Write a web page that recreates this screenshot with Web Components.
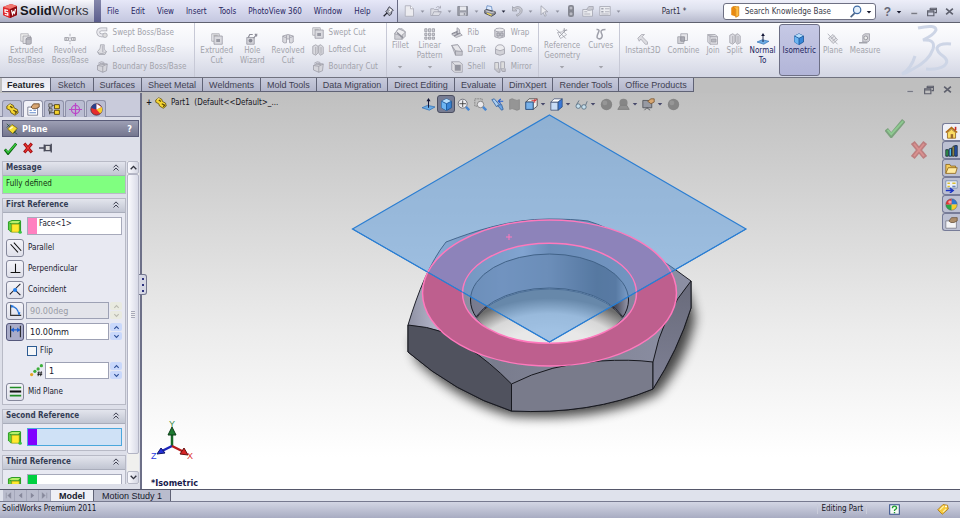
<!DOCTYPE html>
<html lang="en">
<head>
<meta charset="utf-8">
<title>SolidWorks - Part1</title>
<style>
html,body{height:100%;margin:0}
body{font-family:"DejaVu Sans Condensed","DejaVu Sans",sans-serif;font-size:8px;line-height:10px;color:#16182c;overflow:hidden}
</style>
</head>
<body>
<sw-app></sw-app>
<script>
const ICONS = {
  cube3d:'<path d="M1 4l8-3 6 2v9l-7 3-7-3z" fill="#c8141c"/><path d="M1 4l7 2v9l-7-3z" fill="#e0282c"/><path d="M8 6l7-3v9l-7 3z" fill="#8e0c12"/><path d="M1 4l8-3 6 2-7 3z" fill="#f27870"/><path d="M6 7.500l-3-.7v2.200l2.800 1v2.200l-3-1M9.500 7.200l1 4 1-2.500 1 1.600 1-4.500" fill="none" stroke="#fff" stroke-width="1.200"/>',
  pin:'<path d="M9 1l6 5-2 2-1 4-3 2-5-6 2-2z" fill="#a4a6b2" stroke="#22232f"/><path d="M6 10l-5 5" stroke="#22232f" stroke-width="2"/><path d="M9 4l3 2-3 3" fill="none" stroke="#fff" stroke-width="1.500"/>',
  page:'<path d="M3 1h7l4 4v10H3z" fill="#ececf0" stroke="#a5a7b3"/><path d="M10 1v4h4" fill="#fff" stroke="#a5a7b3"/>',
  open:'<path d="M1 14V5h4l1 1h5v3h4l-3 5z" fill="#dcdde4" stroke="#a0a2af"/><path d="M3 14l2-5h10M8 4c2-3 4-2 6 0M14 1v3h-3" fill="none" stroke="#a0a2af"/>',
  save:'<path d="M1 2h13v12H1z" fill="#9c9ea9" stroke="#7f818c"/><path d="M4 2h8v5H4z" fill="#e8e9ee"/><path d="M4 10h8v4H4z" fill="#d4d5dc"/><path d="M9 11h2v2H9z" fill="#7f818c"/>',
  print:'<path d="M3 7l1-6 6 1 1 6z" fill="#dceaff" stroke="#5c84bc"/><path d="M1 7l3-1 11 3v3l-5 3-9-4z" fill="#8d8e95" stroke="#34363f"/><path d="M2 7.500l8 2.500 4-1" fill="none" stroke="#e8e8ec"/><path d="M4 11l6 2.500" fill="none" stroke="#f5dc50" stroke-width="1.500"/>',
  undo:'<path d="M2 2v6h6L6 6c3-2 6-1 6 2s-3 4-5 5l1 2c4-2 7-4 7-8S9 0 4 4z" fill="#c7c8d0" stroke="#9a9ca8"/>',
  cursor:'<path d="M4 1v12l3-3 2 5 2-1-2-5h4z" fill="#ececf1" stroke="#9a9ca8"/>',
  traffic:'<rect x="4" y="0" width="8" height="16" rx="3" fill="#858792"/><circle cx="8" cy="4" r="2" fill="#b9bac3"/><circle cx="8" cy="11.500" r="2" fill="#b9bac3"/>',
  props:'<path d="M1 6h13v9H1z" fill="#ebecf0" stroke="#a0a2ae"/><path d="M6 6l3-4h6v4l-4 1H8z" fill="#c9cad2" stroke="#a0a2ae"/><path d="M3 9h4M3 12h8" stroke="#a0a2ae"/>',
  list:'<path d="M1 2h14v12H1z" fill="#ebecf0" stroke="#a0a2ae"/><path d="M3 4h3v2H3zM3 8h3v2H3z" fill="#a0a2ae"/><path d="M8 5h6M8 9h6M3 12h10" stroke="#a0a2ae"/>',
  book:'<path d="M3 2l6-2v14l-6-2z" fill="#e98a10"/><path d="M5 1h8v12l-4 2V4z" fill="#ffbe43" stroke="#d07808"/>',
  lens:'<circle cx="10" cy="6" r="4.500" fill="#e4f0fb" stroke="#3f6ba4" stroke-width="1.500"/><path d="M7 10l-5 5" stroke="#4b6486" stroke-width="2"/>',
  min:'<path d="M2 10h11v3H2z" fill="#6b6d7a" stroke="#fff" stroke-width=".5"/>',
  restore:'<path d="M5 2h10v7h-3M5 2v3M5 4h10" fill="none" stroke="#5c5e6b" stroke-width="1.800"/><path d="M1 6h10v8H1zM1 8h10" fill="none" stroke="#5c5e6b" stroke-width="1.800"/>',
  close:'<path d="M2 3l12 10M14 3L2 13" stroke="#5e606d" stroke-width="3"/>',
  extrude:'<path d="M1 1h10v10H1z" fill="#eee" stroke="#a9a9b1"/><path d="M4 4h10v10H4z" fill="#e0e0e4" stroke="#9d9da6"/><path d="M8 8h7v6l-2 1H8zM8 8l2-2h5v2" fill="#bbbbc2" stroke="#92929b"/>',
  revolve:'<path d="M8 1v14" stroke="#999aa4" stroke-dasharray="3 1"/><path d="M6 6H1v4h5zM10 6h5v4h-5z" fill="#e1e1e6" stroke="#96979f"/><path d="M3 7v2M13 7v2" stroke="#888"/>',
  sweep:'<path d="M15 3H7a4 4 0 0 0 0 8h4" fill="none" stroke="#a6a7b0" stroke-width="5"/><path d="M14 3H7a4 4 0 0 0 0 8h4" fill="none" stroke="#e9e9ee" stroke-width="3"/><circle cx="12" cy="11" r="3" fill="#ddd" stroke="#a6a7b0"/>',
  loft:'<path d="M6 1h5c0 6 0 7 3 9l-2 4H4l-2-4c3-3 4-4 4-9z" fill="#dedee3" stroke="#a2a3ac"/><path d="M9 2v9" stroke="#bcbcc5" stroke-width="2"/><path d="M2 11q6 4 12-1" fill="none" stroke="#a2a3ac"/>',
  boundary:'<path d="M2 6l5-3 8 1-1 9-5 2-7-3z" fill="#d5d5db" stroke="#999aa4"/><path d="M2 6l7 1 6-3M9 7v8M5 4l7 1" fill="none" stroke="#999aa4"/><path d="M3 3l4-2 4 1" fill="none" stroke="#999aa4"/>',
  cut:'<path d="M1 1h10v10H1z" fill="#ededf0" stroke="#a1a1aa"/><path d="M4 4h11v11H4z" fill="#dadadf" stroke="#9595a0"/><path d="M7 8h5v4H7z" fill="#999aa4"/><path d="M3 3h6" stroke="#999"/>',
  hole:'<path d="M1 6h10v9H1z" fill="#d2d2d8" stroke="#93939d"/><circle cx="6" cy="10" r="2.500" fill="#888994"/><path d="M3 6l2-4h4M10 7l5-6M12 1l1 2M15 4l-2-1" stroke="#8c8c97" fill="none" stroke-width="1.500"/>',
  revcut:'<path d="M1 4q7-4 14 0v8q-2 2-5 1V8H6v5q-3 1-5-1z" fill="#dadadf" stroke="#9b9ba5"/><path d="M1 4q2 2 5 2V3M10 3v3q3 0 5-2M6 6v2M10 6v2" fill="none" stroke="#9b9ba5"/>',
  fillet:'<path d="M1 15V7l5-6h5l4 4v6l-4 4z" fill="#d1d1d7" stroke="#9a9ba4"/><path d="M1 8q7 0 10 7V9q4-2 4-4L6 1z" fill="#ededf0" stroke="#9a9ba4"/><path d="M4 6l8 7" stroke="#8f909a" stroke-width="2"/>',
  linear:'<g fill="#d4d4da" stroke="#93949e"><path d="M1 1h3v4H1zM6 1h3v4H6zM11 1h3v4h-3zM1 7h3v3H1zM6 7h3v3H6zM11 7h3v3h-3zM1 12h3v3H1zM6 12h3v3H6zM11 12h3v3h-3z"/></g>',
  rib:'<path d="M1 10l6 4 8-3-3-3-1-5-3-2v6z" fill="#d3d3d9" stroke="#999aa4"/><path d="M1 9l7-3v4l4-2M4 12l4-2" fill="none" stroke="#888994" stroke-width="1.500"/>',
  draft:'<path d="M1 2l8-1 6 9v5H6z" fill="#c7c7ce" stroke="#999aa4"/><path d="M1 2l5 7v6M6 9h9" fill="none" stroke="#8f909a"/><path d="M1 2l8-1 6 9-9-1z" fill="#e6e6ea" stroke="#999aa4"/>',
  shell:'<path d="M1 1h10l4 3v11H5l-4-3z" fill="#e0e0e5" stroke="#999aa4"/><path d="M5 5h8v8H5z" fill="#94959f"/><path d="M1 1l4 4" stroke="#999aa4"/>',
  wrap:'<path d="M1 4v9q6 4 13 0V4z" fill="#d1d1d7" stroke="#999aa4"/><ellipse cx="7.500" cy="4" rx="6.500" ry="2.500" fill="#ececef" stroke="#999aa4"/><path d="M4 8h3v4H4zM9 8h3v4H9z" fill="none" stroke="#888994"/>',
  dome:'<path d="M2 7v6q6 4 12 0V7z" fill="#d1d1d7" stroke="#999aa4"/><path d="M2 7q0-6 6-6t6 6q-6 4-12 0z" fill="#ececef" stroke="#999aa4"/>',
  mirror:'<path d="M1 2h5v9H1zM9 1h5v9H9z" fill="#ddd" stroke="#999aa4"/><path d="M1 11l4 4h3v-5M9 10l2 4h4v-4" fill="#c5c5cc" stroke="#999aa4"/>',
  refgeo:'<path d="M2 6l4 8 8-5-4-4z" fill="none" stroke="#a3a4ad"/><path d="M1 2l12 12M14 2L4 12M11 0v5M9 3h6" stroke="#93949e"/>',
  curves:'<path d="M2 2c8-1-1 7 1 11 4 4 8-1 6-5s-1-6 5-6" fill="none" stroke="#9fa0aa" stroke-width="2"/>',
  instant:'<path d="M1 7l5-5h4l-3 3 7 7v3h-3L5 8l-2 3z" fill="#dcdce1" stroke="#a5a6af"/>',
  combine:'<path d="M1 5h8v9H1z" fill="#d0d0d6" stroke="#9a9ba4"/><path d="M5 1h9v9H5z" fill="#e6e6ea" stroke="#9a9ba4"/><path d="M5 5h5v6H5z" fill="#aaabb4" stroke="#8c8d97"/>',
  join:'<path d="M1 2h10l3 3v10H4l-3-3z" fill="#e1e1e6" stroke="#9d9ea7"/><path d="M1 2l3 3h10M4 5v10M6 8h6v4H6z" fill="#b8b9c1" stroke="#9d9ea7"/>',
  split:'<path d="M1 3l4-2 3 2v9l-3 3-4-2zM9 2l3-1 3 3v9l-4 2-2-3z" fill="#dadae0" stroke="#9d9ea7"/><path d="M5 4v10M12 4v9" stroke="#9d9ea7"/>',
  normal:'<path d="M0 12l7-3 9 2-7 4z" fill="#6cacE4" stroke="#2566ae" stroke-width=".8"/><path d="M8 12V3" stroke="#111536" stroke-width="1.200"/><path d="M8 0l2.500 4h-5z" fill="#111536"/>',
  iso:'<path d="M8 1l6 3v8l-6 3.500L2 12V4z" fill="#3886d8" stroke="#155092"/><path d="M2 4l6 3v8.500L2 12z" fill="#6db5f2"/><path d="M8 1l6 3-6 3-6-3z" fill="#b5dcfa"/><path d="M2 4l6 3 6-3M8 7v8" fill="none" stroke="#155092"/>',
  plane:'<path d="M2 7l6-5 6 7-6 5z" fill="#e6e6ea" stroke="#a3a4ad"/><path d="M1 1l13 14M5 8l5-4M7 11l5-4" stroke="#a3a4ad"/>',
  measure:'<path d="M5 3l3-2h6v9l-2 2H5z" fill="#d0d0d6" stroke="#999aa4"/><circle cx="9" cy="6.500" r="2.500" fill="#eee" stroke="#83848e"/><path d="M0 12h11v2H0z" fill="#a3a4ad"/>',
  part:'<path d="M1 4l4-3 4 2 1 3 4 2 1 4-4 3-5-3-1-3-4-2z" fill="#f6d631" stroke="#5b4708"/><path d="M5 4l3 2M9 9l4 2-2 2" fill="none" stroke="#5b4708" stroke-width="1.500"/><path d="M3 3l3-1" stroke="#fff8b8"/>',
  propgr:'<path d="M1 5h12v10H1z" fill="#fff" stroke="#6a6f86"/><path d="M3 9h3M3 12h8M8 9h3" stroke="#3f6fc2"/><path d="M5 5l3-4h7v4l-4 2H7z" fill="#d9a671" stroke="#674525"/>',
  config:'<path d="M2 1v13M2 3h5M2 12h6" stroke="#333" fill="none"/><path d="M1 1h4v4H1zM1 7h4v3H1z" fill="#bbb" stroke="#555"/><path d="M8 2h6v5H8zM8 9h6v5H8z" fill="#f5d42c" stroke="#473706"/>',
  target:'<circle cx="8" cy="8" r="5" fill="none" stroke="#bb45c8" stroke-width="1.500"/><path d="M8 0v16M0 8h16" stroke="#bb45c8" stroke-width="1.500"/>',
  ball:'<path d="M8 8V1a7 7 0 0 1 7 7z" fill="#2c78d2"/><path d="M8 8h7a7 7 0 0 1-7 7z" fill="#f6d02a"/><path d="M8 8v7a7 7 0 0 1-7-7z" fill="#2aa746"/><path d="M8 8H1a7 7 0 0 1 7-7z" fill="#e83333"/><circle cx="8" cy="8" r="7" fill="none" stroke="#555" stroke-width=".6"/><circle cx="6" cy="5" r="2" fill="#ffffff88"/>',
  ball2:'<circle cx="8" cy="8" r="7" fill="#e62b2b" stroke="#40384b"/><path d="M8 8V1a7 7 0 0 0-6.500 5z" fill="#28408c"/><path d="M8 8l6.500-3a7 7 0 0 1-2 8z" fill="#f6d02a"/><path d="M8 1l6 4-6 3z" fill="#fff"/>',
  planey:'<path d="M8 2l7 5-6 7-7-6z" fill="#f7df36" stroke="#716207"/><path d="M1 1l4 4M11 12l4 3M1 6l4-4M10 14l4-4" stroke="#1c4a2d" fill="none"/><path d="M5 8l4-3" stroke="#fffbd0" stroke-width="2"/>',
  ok:'<path d="M1 9l4 5L15 2" fill="none" stroke="#0c6c10" stroke-width="3.500"/><path d="M2 9.500l3 3.500L14.500 2.500" fill="none" stroke="#3bd042" stroke-width="1.500"/>',
  cancel:'<path d="M3 2l10 12M13 2L3 14" stroke="#a80f12" stroke-width="4"/><path d="M4 3l8 10M12 3L4 13" stroke="#f03a36" stroke-width="1.500"/>',
  pushpin:'<path d="M0 8h6M6 4v8M7 5h6v6H7zM14 3v10" fill="#ddd" stroke="#4a4c5b" stroke-width="1.500"/>',
  face:'<path d="M1 3l4-2h9l1 1v10l-2 2H4l-3-3z" fill="#2f9e28"/><path d="M2 4v7l2.500 2.500V6z" fill="#5fd044"/><path d="M2 3.500l3.500-1.500H14l-2 2.500H4.500z" fill="#b7f06a"/><path d="M5 5.500h8V14H5z" fill="#ffe92e" stroke="#a09a10" stroke-width=".6"/><circle cx="14" cy="14" r="1.800" fill="#37c23f"/>',
  parallel:'<path d="M2 4l9 10M6 2l9 10" stroke="#111" stroke-width="1.300"/>',
  perp:'<path d="M8 2v11M2 13h12" stroke="#111" stroke-width="1.300"/>',
  coincident:'<path d="M14 1L7 8 1 14M8 9l6 6" stroke="#1a1a28" stroke-width="1.300"/><circle cx="7.500" cy="8.500" r="2.500" fill="#2680ec"/>',
  angle:'<path d="M2 1v13h13" fill="none" stroke="#333" stroke-width="1.300"/><path d="M3 3q8 1 9 10" fill="none" stroke="#2474da" stroke-width="1.500"/><path d="M2 1l4 1-3 3zM13 14l-2-4 3 0z" fill="#2474da"/>',
  distance:'<path d="M2 1v14M14 1v14" stroke="#222" stroke-width="1.300"/><path d="M3 6h10" stroke="#1c5fd0" stroke-width="1.500"/><path d="M2 6l4-3v6zM14 6l-4-3v6z" fill="#1c5fd0"/>',
  count:'<circle cx="2" cy="13" r="2" fill="#e4a421"/><circle cx="6" cy="9" r="2" fill="#3caf3b"/><circle cx="10" cy="6" r="2" fill="#3caf3b"/><circle cx="14" cy="2" r="2" fill="#3caf3b"/><path d="M11 9l-1 6M14 9l-1 6M9 11h6M9 13h6" stroke="#111"/>',
  mid:'<path d="M1 3h14M1 13h14" stroke="#208d25" stroke-width="2"/><path d="M1 8h14" stroke="#111" stroke-width="2.500"/>',
  zoomfit:'<circle cx="7" cy="7" r="5.500" fill="#ececf0" stroke="#62646e"/><path d="M7 3v8M3 7h8" stroke="#333"/><path d="M11 11l4 4" stroke="#4a87d2" stroke-width="3"/>',
  zoombox:'<rect x="1" y="1" width="9" height="9" fill="none" stroke="#777" stroke-dasharray="2 1"/><circle cx="8" cy="8" r="4" fill="#e9e9ed" stroke="#777"/><path d="M11 11l4 4" stroke="#4a87d2" stroke-width="3"/>',
  prev:'<path d="M1 2l3-1 6 7-3 3z" fill="#a9cdf2" stroke="#34619c"/><path d="M8 9l5 6 2-1-2-6z" fill="#6ba4e4" stroke="#34619c"/><path d="M15 4H9M12 1L9 4l3 3" stroke="#255fd0" stroke-width="1.500" fill="none"/>',
  section:'<path d="M2 2q3-2 6 0t6 0v12q-3 2-6 0t-6 0z" fill="#959595" stroke="#888"/>',
  views:'<path d="M1 5h9v9H1z" fill="#78b2ea" stroke="#30517e"/><path d="M1 5l4-4h10v9l-5 4V5z" fill="#eee" stroke="#444"/><path d="M10 5l5-4M12 1v5M8 3h6" stroke="#d23535"/><path d="M1 5h9v9H1z" fill="#78b2ea" stroke="#30517e"/>',
  style:'<path d="M1 5h9v10H1z" fill="#c8dcf6" stroke="#4a5879"/><path d="M1 5l4-4h10l-5 4z" fill="#fff" stroke="#4a5879"/><path d="M10 5l5-4v10l-5 4z" fill="#3a78d8" stroke="#30517e"/>',
  glasses:'<circle cx="4" cy="10" r="2.800" fill="#c6e0ee" stroke="#546a7c"/><circle cx="11" cy="11" r="2.800" fill="#c6e0ee" stroke="#546a7c"/><path d="M2 8l3-5M13 9l2-5M7 10h1" stroke="#546a7c" fill="none"/>',
  sphere:'<circle cx="8" cy="8" r="7" fill="#858585"/><circle cx="6" cy="6" r="3" fill="#969696"/>',
  scene:'<circle cx="8" cy="6" r="5" fill="#868686"/><path d="M1 14l3-5h8l3 5z" fill="#919191" stroke="#7c7c7c"/>',
  render:'<path d="M1 3h11v9H1z" fill="#979aa3" stroke="#4e5058"/><path d="M7 4l4-3h4v4l-4 2z" fill="#d8a771" stroke="#795633"/><path d="M3 15l3-3 4 3" fill="none" stroke="#4e5058"/>',
  home:'<path d="M1 8l7-6 7 6" fill="none" stroke="#b06a10" stroke-width="2"/><path d="M3 8l5-4 5 4v7H3z" fill="#fbdd62" stroke="#92631b"/><path d="M7 10h3v5H7z" fill="#9a6a30"/><path d="M12 1h2v4h-2z" fill="#c92b24"/>',
  library:'<path d="M1 7h3v8H1z" fill="#36a04a" stroke="#123"/><path d="M5 6l3-1v10H5z" fill="#47b4ea" stroke="#123"/><path d="M9 4l2-2v13H9z" fill="#f3d43a" stroke="#123"/><path d="M12 2h3v13h-3z" fill="#2a58b6" stroke="#123"/>',
  folder:'<path d="M1 14V3h5l1 2h6v3" fill="#f5cd5d" stroke="#89611a"/><path d="M1 14l3-7h11l-2 7z" fill="#ffeaa0" stroke="#89611a"/>',
  palette:'<path d="M1 1h14v9H1z" fill="#edf2fa" stroke="#7488a9"/><path d="M3 3h3v2H3zM9 3h4v2H9zM3 7h3v2H3z" fill="#d8bc30"/><path d="M9 7h4v2H9z" fill="#6c86b4"/><path d="M1 13h8M6 10l4 3-4 3" stroke="#1c35c4" fill="none" stroke-width="1.800"/>',
  custom:'<path d="M1 6h13v9H1z" fill="#f4f4f6" stroke="#7b7d89"/><path d="M5 6l3-4h7v4l-4 2H7z" fill="#ac8d6b" stroke="#6d5741"/>',
  help:'<path d="M1 1h14v14H1z" fill="#f6fbf6" stroke="#334e8a" stroke-width="1.500"/><path d="M5 6q0-3 3-3t3 3q0 1-2 2-1 .6-1 2M8 11.500v2" fill="none" stroke="#1d9c2c" stroke-width="2"/>',
  tag:'<path d="M1 9l7-7 6 1 1 5-8 7z" fill="#f7c93a" stroke="#a66f0a"/><path d="M4 9l5-5M8 12l4-4" stroke="#fff0a4" stroke-width="1.500"/><circle cx="12" cy="4.500" r="1.300" fill="#fff"/>',
  chev:'<path d="M4 7l4-4 4 4M4 12l4-4 4 4" fill="none" stroke="#343648" stroke-width="1.500"/>',
  up:'<path d="M3 11l5-5 5 5" fill="none" stroke="currentColor" stroke-width="2.500"/>',
  down:'<path d="M3 5l5 5 5-5" fill="none" stroke="currentColor" stroke-width="2.500"/>',
  tri:'<path d="M2 5h12l-6 7z" fill="currentColor"/>',
  first:'<path d="M4 3v10M12 3L7 8l5 5z" stroke="#85879a" fill="#85879a"/>',
  back:'<path d="M11 3L5 8l6 5z" fill="#85879a"/>',
  fwd:'<path d="M5 3l6 5-6 5z" fill="#85879a"/>',
  last:'<path d="M12 3v10M4 3l5 5-5 5z" stroke="#85879a" fill="#85879a"/>'
};
const RESET = `*{box-sizing:border-box}button,input{font:inherit;color:inherit;margin:0;padding:0;border:0;background:none;border-radius:0;outline:0}button{display:inline-flex;align-items:center;justify-content:center;white-space:nowrap}`;
function define(name, css, html) {
  customElements.define(name, class extends HTMLElement {
    constructor() {
      super();
      const root = this.attachShadow({mode:'open'});
      root.innerHTML = `<style>${RESET}${css}</style>` + (typeof html === 'function' ? html(this) : html);
    }
  });
}
const ic = (n, s = 12) => `<sw-icon name="${n}" size="${s}"></sw-icon>`;
const btn = (n, label, s = 12, cls = '') => `<button class="${cls}" aria-label="${label}">${ic(n, s)}</button>`;

define('sw-icon', ':host{display:inline-flex;flex:none}svg{display:block}', e => {
  const s = e.getAttribute('size') || 12;
  return `<svg viewBox="0 0 16 16" width="${s}" height="${s}" aria-hidden="true">${ICONS[e.getAttribute('name')] || ''}</svg>`;
});

/* Title bar */
define('sw-titlebar', `
:host{display:flex;height:23px;align-items:stretch;background:linear-gradient(#edeef9,#dfe2ef 40%,#b7bacd);border-bottom:1px solid #5f616f}
.brand{display:flex;align-items:center;gap:2px;width:94px;padding-left:2px;font:13px/16px "Liberation Sans",Arial,sans-serif;color:#33343b;background:linear-gradient(#f8f8fc,#d0d2e0 55%,#a9acc2)}
.brand b{color:#16171c}.grip{width:7px;background:linear-gradient(#8587ab,#5c5e8d)}
nav{display:flex;align-items:center;gap:12px;padding:1px 3px 0 6px;color:#27265f;background:linear-gradient(#e6e7f8,#c4c7e0);border-right:1px solid #686a83}
nav button{height:20px}
.quick{display:flex;align-items:center;padding:0 5px;gap:5px;color:#8f919f}.quick .dark{color:#24263b}
.name{flex:1;text-align:center;padding-top:1px;min-width:40px;align-self:center;color:#303042}
.search{display:flex;align-items:center;width:153px;margin:3px 0;height:17px;background:#fff;border:1px solid #6e7083;border-radius:3px;padding:0 3px 0 5px;gap:4px}
.search input{flex:1;min-width:0;height:13px;color:#3b3c4a}.search input::placeholder{color:#3b3c4a;opacity:1}
.win{display:flex;align-items:center;gap:8px;padding:1px 6px 0 8px}.q{font:bold 12px/14px "Liberation Sans",Arial,sans-serif;color:#666878;margin-right:-3px}`,
`<div class="brand">${ic('cube3d',16)}<span><b>Solid</b>Works</span></div><div class="grip"></div>
<nav>${['File','Edit','View','Insert','Tools','PhotoView 360','Window','Help'].map(t=>`<button>${t}</button>`).join('')}${btn('pin','Pin menu',11)}</nav>
<div class="quick">${[['page','New',1],['open','Open',1],['save','Save',1],['print','Print',1],['undo','Undo',1],['cursor','Select',1],['traffic','Rebuild',0],['props','File properties',0],['list','Options',1]].map(([n,l,a])=>btn(n,l,12)+(a?btn('tri',l+' menu',5,n==='print'?'dark':''):'')).join('')}</div>
<div class="name">Part1 *</div>
<div class="search">${ic('book',12)}<input type="search" aria-label="Search Knowledge Base" placeholder="Search Knowledge Base">${btn('lens','Search',13)}${btn('tri','Search options',6)}</div>
<div class="win"><button class="q">?</button>${btn('tri','Help menu',6)}${btn('min','Minimize',9)}${btn('restore','Restore',10)}${btn('close','Close',9)}</div>`);

/* Ribbon */
define('sw-tool', `
:host{display:flex}button{flex-direction:column;justify-content:flex-start;color:#a2a3ab;padding-top:10px;height:54px}
span{line-height:10px;text-align:center;white-space:pre-line;margin-top:1px}
:host([drop]) button{padding-top:5px}.arrow{margin-top:auto;margin-bottom:4px}
:host([on]) button{color:#222560}
:host([pressed]) button{background:linear-gradient(#c6c9e5,#b2b5d8);border:1px solid #6d6f85;border-radius:3px;height:52px;margin:1px 0;padding:8px 3px 0}
:host([pressed]){margin:0 -4px}`,
e => `<button>${ic(e.getAttribute('icon'),12)}<span>${e.getAttribute('label').replace('|','\n')}</span>${e.hasAttribute('drop')?`<i class="arrow">${ic('tri',6)}</i>`:''}</button>`);
define('sw-tool-list', `:host{display:flex;flex-direction:column;gap:5px;padding-top:4px}button{gap:5px;justify-content:flex-start;height:12px;color:#a2a3ab}`,
e => e.getAttribute('items').split(',').map(p=>{const [n,t]=p.split(':');return `<button>${ic(n,12)}${t}</button>`}).join(''));
define('sw-ribbon', `
:host{display:flex;height:55px;background:linear-gradient(#fdfdfe,#f3f4f9 40%,#d3d6e4);border-bottom:1px solid #70727f;overflow:hidden}
.g{display:flex;gap:7px;padding:0 8px 0 5px;border-right:1px solid #c7c9d6}.first{padding-left:8px}.last{border:0}
.t{gap:8px;padding:0 6px 0 5px}.logo{margin-left:auto;height:54px;width:62px;flex:none}`,
`<div class="g first"><sw-tool icon="extrude" label="Extruded|Boss/Base"></sw-tool><sw-tool icon="revolve" label="Revolved|Boss/Base"></sw-tool><sw-tool-list items="sweep:Swept Boss/Base,loft:Lofted Boss/Base,boundary:Boundary Boss/Base"></sw-tool-list></div>
<div class="g"><sw-tool icon="cut" label="Extruded|Cut"></sw-tool><sw-tool icon="hole" label="Hole|Wizard"></sw-tool><sw-tool icon="revcut" label="Revolved|Cut"></sw-tool><sw-tool-list items="cut:Swept Cut,split:Lofted Cut,boundary:Boundary Cut"></sw-tool-list></div>
<div class="g t"><sw-tool drop icon="fillet" label="Fillet"></sw-tool><sw-tool drop icon="linear" label="Linear|Pattern"></sw-tool><sw-tool-list items="rib:Rib,draft:Draft,shell:Shell"></sw-tool-list><sw-tool-list items="wrap:Wrap,dome:Dome,mirror:Mirror"></sw-tool-list></div>
<div class="g t"><sw-tool drop icon="refgeo" label="Reference|Geometry"></sw-tool><sw-tool drop icon="curves" label="Curves"></sw-tool></div>
<div class="g last"><sw-tool icon="instant" label="Instant3D"></sw-tool><sw-tool icon="combine" label="Combine"></sw-tool><sw-tool icon="join" label="Join"></sw-tool><sw-tool icon="split" label="Split"></sw-tool><sw-tool on icon="normal" label="Normal|To"></sw-tool><sw-tool on pressed icon="iso" label="Isometric"></sw-tool><sw-tool icon="plane" label="Plane"></sw-tool><sw-tool icon="measure" label="Measure"></sw-tool></div>
<svg class="logo" viewBox="898 23 62 54" aria-hidden="true"><g fill="none" stroke="#cdd5e6" stroke-width="3"><path d="M918 28q18-4 18 2-2 5-13 10 13-1 10 9-4 12-20 20-6 4-11 5 9-5 13-18"/><path d="M951 44q-12-1-14 4 0 4 6 8 7 5 1 10-6 4-18 3"/></g></svg>`);

/* Command tabs */
define('sw-tab', `:host{display:flex}button{height:14px;min-width:43px;padding:0 6px;font:9px/12px "Liberation Sans",Arial,sans-serif;color:#3f4152;background:linear-gradient(#c8cbdc,#b3b6cb);border:1px solid #5f6275;border-left-width:0;border-top:0}
:host([active]) button{font-weight:bold;color:#1e1f2a;padding:0 5px;background:linear-gradient(#e7e8f1,#f5f5fa)}`, '<button role="tab"><slot></slot></button>');
define('sw-tabbar', `:host{display:flex;height:15px;background:#bfbfbf;padding-left:2px}.w{margin-left:auto;display:flex;gap:9px;padding:7px 8px 0 0;height:22px;position:relative;z-index:2;align-items:flex-start}`,
['Features','Sketch','Surfaces','Sheet Metal','Weldments','Mold Tools','Data Migration','Direct Editing','Evaluate','DimXpert','Render Tools','Office Products'].map((t,i)=>`<sw-tab ${i?'':'active'}>${t}</sw-tab>`).join('')+
`<div class="w">${btn('min','Minimize document',9)}${btn('restore','Restore document',10)}${btn('close','Close document',9)}</div>`);

/* Property panel */
define('sw-section', `:host{display:block;flex:none;border:1px solid #b8bac6;background:#e8e9f2}
header{display:flex;align-items:center;justify-content:space-between;height:14px;padding:0 4px 2px 3px;font-weight:bold;color:#343d55;background:linear-gradient(#e3e5ed,#c1c5d2);border-bottom:1px solid #a9adbb}
.b{display:flex;flex-direction:column;padding-bottom:2px}:host([flush]) .b{padding:0}`,
e => `<header><span>${e.getAttribute('label')}</span>${btn('chev','Collapse '+e.getAttribute('label'),10)}</header><div class="b"><slot></slot></div>`);
define('sw-selection', `:host{display:flex;gap:5px;align-items:center;padding:4px 3px 2px 4px}
.f{display:flex;flex:1;min-width:0;height:18px;border:1px solid #a7aabb;background:#fff}i{width:9px;flex:none;background:var(--c)}
input{flex:1;min-width:0;padding:0 2px 5px}:host([focused]) input{background:#cfe1f6}:host([focused]) .f{border-color:#4ba7dc}`,
e => `${ic('face',15)}<div class="f"><i></i><input aria-label="Selected entities" value="${e.getAttribute('value')||''}"></div>`);
define('sw-relation', `:host{display:flex;height:21px;align-items:center;padding-left:3px}
button{gap:4px}.k{display:flex;align-items:center;justify-content:center;width:18px;height:18px;border:1px solid #85889b;border-radius:3px;background:linear-gradient(#f4f4f9,#dfe0ea)}
:host([on]) .k{background:#a9acc9;border-color:#55587c}`,
e => `<button aria-label="${e.getAttribute('label')||e.textContent}"><span class="k">${ic(e.getAttribute('icon'),13)}</span><slot></slot></button>`);
define('sw-number', `:host{display:flex;flex:1;min-width:0;align-items:center;gap:1px;height:17px}input{flex:1;min-width:0;height:17px;border:1px solid #9da1b4;background:#fff;padding:0 3px;font-size:9px}
.s{display:flex;flex:none;flex-direction:column;gap:1px;color:#2e4f97}.s button{width:12px;height:8px;background:#c9d8fb;border-radius:2px}
:host([off]) input{background:#e3e4ea;color:#9a9ca6}:host([off]) .s{color:#babab0}:host([off]) .s button{background:#e9eae0}`,
e => `<input aria-label="${e.getAttribute('label')}" value="${e.getAttribute('value')}" ${e.hasAttribute('off')?'disabled':''}><div class="s">${btn('up','Increase',7)}${btn('down','Decrease',7)}</div>`);
define('sw-panel', `
:host{display:flex;flex-direction:column;width:142px;flex:none;background:#dddfe9;border-right:2px solid #6d7088;position:relative;z-index:1;min-height:0}
.tabs{display:flex;height:24px;padding:7px 0 0 2px;gap:1px;border-bottom:1px solid #8b8ea4;background:#c9cbdb}
.tabs button{width:20px;height:17px;border:1px solid #8e91a8;border-bottom:0;border-radius:3px 3px 0 0;background:#babdd2}.tabs .a{background:#f1f1f7}
h2{display:flex;align-items:center;gap:4px;margin:3px 1px 0 2px;height:17px;padding:0 6px 0 3px;font-size:9px;color:#fff;background:linear-gradient(#9d9fb4,#74768f);border:1px solid #595b78}h2 button{margin-left:auto}
.act{display:flex;gap:5px;padding:3px 4px 5px;height:24px;align-items:center}
.body{display:flex;flex:1;min-height:0;margin:0 1px 5px 2px}
.scroll{flex:1;overflow:hidden;display:flex;flex-direction:column;gap:4px;min-width:0;padding-right:1px}
.bar{width:12px;display:flex;flex-direction:column;color:#30323d;background:#f0f0ee}.bar button{height:13px;background:linear-gradient(90deg,#fafafe,#d4d6e2);border:1px solid #b6b8c6;border-radius:2px}
.thumb{flex:1;margin-bottom:17px;border:1px solid #b2b4c4;border-radius:2px;background:linear-gradient(90deg,#fbfbfe,#d9dbe8);display:flex;align-items:center;justify-content:center}.thumb i{width:4px;height:7px;background:repeating-linear-gradient(#a7a9b9 0 1px,#eee 1px 2px)}
.ok{background:#80ff80;color:#12300f;height:17px;padding:3px}
.row{display:flex;height:21px;align-items:center;padding-right:3px}.row sw-relation{margin-right:2px}
.flip{display:flex;align-items:center;gap:3px;height:18px;padding-left:24px}.flip input{appearance:none;width:10px;height:10px;border:1px solid #2c5b93;background:#f5f6f8}
.num{padding-left:27px;gap:2px}
.handle{position:absolute;right:-7px;top:181px;width:8px;height:21px;background:#d5d7e4;border:1px solid #74778f;border-left:0;border-radius:0 3px 3px 0;display:flex;flex-direction:column;gap:4px}.handle i{width:2px;height:2px;background:#2d337f}`,
`<div class="tabs">${btn('part','FeatureManager',13)}${btn('propgr','PropertyManager',13,'a')}${btn('config','ConfigurationManager',13)}${btn('target','DimXpertManager',13)}${btn('ball2','DisplayManager',13)}</div>
<h2>${ic('planey',12)}Plane<button>?</button></h2>
<div class="act">${btn('ok','OK',13)}${btn('cancel','Cancel',12)}${btn('pushpin','Keep visible',14)}</div>
<div class="body"><div class="scroll">
<sw-section flush label="Message"><div class="ok">Fully defined</div></sw-section>
<sw-section label="First Reference"><sw-selection value="Face&lt;1&gt;" style="--c:#ff80c0"></sw-selection>
<sw-relation icon="parallel">Parallel</sw-relation><sw-relation icon="perp">Perpendicular</sw-relation><sw-relation icon="coincident">Coincident</sw-relation>
<div class="row"><sw-relation icon="angle" label="At angle"></sw-relation><sw-number off label="Angle" value="90.00deg"></sw-number></div>
<div class="row"><sw-relation on icon="distance" label="Offset distance"></sw-relation><sw-number label="Offset distance" value="10.00mm"></sw-number></div>
<label class="flip"><input type="checkbox">Flip</label>
<div class="row num">${ic('count',13)}<sw-number label="Number of planes" value="1"></sw-number></div>
<sw-relation icon="mid">Mid Plane</sw-relation></sw-section>
<sw-section label="Second Reference"><sw-selection focused style="--c:#8000ff"></sw-selection></sw-section>
<sw-section label="Third Reference"><sw-selection style="--c:#00d040"></sw-selection></sw-section>
</div><div class="bar">${btn('up','Scroll up',9)}<div class="thumb"><i></i></div>${btn('down','Scroll down',9)}</div></div>
<button class="handle" aria-label="Collapse panel"><i></i><i></i><i></i></button>`);

/* Graphics area */
define('sw-model', `:host{display:block}svg{display:block;width:100%;height:100%}text{font:9px "Liberation Sans",Arial,sans-serif}`, `
<svg viewBox="142 93 818 396" preserveAspectRatio="xMidYMid meet" role="img" aria-label="Hex nut with reference plane">
<defs>
<filter id="soft" x="-20%" y="-20%" width="140%" height="140%"><feGaussianBlur stdDeviation="6"/></filter>
<linearGradient id="bore"><stop offset="0" stop-color="#777a8d"/><stop offset=".2" stop-color="#81849b"/><stop offset=".5" stop-color="#74778b"/><stop offset=".8" stop-color="#454857"/><stop offset=".92" stop-color="#4a4d5d"/><stop offset="1" stop-color="#9799ad"/></linearGradient>
<linearGradient id="cham"><stop offset="0" stop-color="#888a9c"/><stop offset=".35" stop-color="#a5a8c0"/><stop offset=".5" stop-color="#74778c"/><stop offset="1" stop-color="#85889e"/></linearGradient>
<linearGradient id="top" x1="0" y1="0" x2="1" y2="0"><stop offset="0" stop-color="#8f91a3"/><stop offset=".1" stop-color="#b3b5ca"/><stop offset=".3" stop-color="#797c8d"/><stop offset="1" stop-color="#8c8fa3"/></linearGradient>
<radialGradient id="floor" cx=".5" cy=".75" r=".65"><stop offset=".5" stop-color="#e8e8e8"/><stop offset=".75" stop-color="#d8d8d8"/><stop offset="1" stop-color="#6c6c6c"/></radialGradient>
<linearGradient id="rt" y1="0" y2="1" x2="0"><stop offset="0" stop-color="#686a7a"/><stop offset="1" stop-color="#7f8195"/></linearGradient>
<clipPath id="hole"><ellipse cx="549.5" cy="293.300" rx="87" ry="50"/></clipPath>
<clipPath id="mouth"><ellipse cx="549.5" cy="300" rx="79" ry="46"/></clipPath>
</defs>
<path d="M412 338L416 360Q460 403 512 416Q600 422 658 394Q688 358 695 318L688 290L560 330Z" fill="#000" opacity=".72" filter="url(#soft)"/>
<path d="M408 325C418 292 430 262 446 242C475 231 510 219 549 219Q572 219 588 221Q625 232 691 281V308Q678 350 653 389Q590 415 511 411Q455 393 408 352Z" fill="url(#top)" stroke="#20222b"/>
<path d="M408 325Q448 328 467 347Q490 362 511.500 384V411Q455 393 408 352Z" fill="#50525e" stroke="#17181e"/>
<path d="M511.500 384Q550 364 600 361Q630 359 653 362V389Q590 415 511.500 411Z" fill="#797b8b" stroke="#17181e"/>
<path d="M691 281V308Q678 350 653 389V362Q662 315 691 281Z" fill="url(#rt)" stroke="#17181e"/>
<ellipse cx="549.5" cy="293" rx="127" ry="73" fill="#be5f8e"/>
<g clip-path="url(#hole)"><rect x="460" y="240" width="180" height="106" fill="url(#cham)"/>
<ellipse cx="549.5" cy="300" rx="79" ry="46" fill="url(#bore)" stroke="#171820"/>
<g clip-path="url(#mouth)"><ellipse cx="549.5" cy="334" rx="79" ry="46" fill="#8f919f" stroke="#171820"/><ellipse cx="549.5" cy="336" rx="79" ry="47" fill="url(#floor)" stroke="#333540"/></g></g>
<path d="M549.500 115L746 229L549.500 342L352.500 229Z" fill="#64a0de" fill-opacity=".55" stroke="#2b7ed2" stroke-width="1.200"/>
<g fill="none" stroke="#ff79bd" stroke-width="1.500"><ellipse cx="549.5" cy="293" rx="127" ry="73"/><ellipse cx="549.5" cy="293.300" rx="87" ry="50"/><path d="M506 237h6M509 234v6" stroke-width="1"/></g>
<path d="M352.500 229L549.500 342L746 229" fill="none" stroke="#2b7ed2"/>
<g><path d="M172 446V430" stroke="#176a28" stroke-width="2.500"/><path d="M172 427l4 8h-8z" fill="#1c7a30" stroke="#0d3d17"/><path d="M172 446L160 452" stroke="#1c24b8" stroke-width="2.500"/><path d="M157 454l4-6 4 5z" fill="#2430d8" stroke="#101668"/><path d="M172 446l12 6" stroke="#b81c1c" stroke-width="2.500"/><path d="M188 455l-8-1 4-6z" fill="#d82424" stroke="#681010"/>
<text x="169" y="427" fill="#3c8c48">Y</text><text x="151" y="459" fill="#2c3ce0">Z</text><text x="187" y="459" fill="#e03030">X</text></g>
</svg>`);
define('sw-viewport', `
:host{display:block;flex:1;min-width:0;position:relative;background:linear-gradient(#c0c0c0,#ececec 60%,#fff 92%)}
sw-model{position:absolute;inset:0}
.tree{position:absolute;left:4px;top:4px;display:flex;align-items:center;gap:3px;height:12px;color:#15151c}.tree button{width:6px;height:10px;font-weight:bold}.tree span{padding-left:1px;white-space:pre}
.views{position:absolute;left:50%;transform:translateX(-50%);top:2px;height:18px;display:flex;align-items:center;gap:4px;color:#46486a}
.views .a{width:18px;height:18px;margin:0 -2px;background:#777c92;border:1px solid #4c4f61;border-radius:3px}.views .m{margin-left:-2px}
.name{position:absolute;left:9px;bottom:1px;font-weight:bold;font-size:9px;color:#191b4d}
.conf{position:absolute;right:31px;top:25px;opacity:.4;display:flex;align-items:flex-start}.conf .x{margin:22px 0 0 4px}
.task{position:absolute;right:0;top:30px;display:flex;flex-direction:column}
.task button{width:18px;height:18px;background:#bcc0d2;border:1px solid #777c98;border-right:0;border-radius:3px 0 0 3px}.task button:first-child{background:#f0f1f7}`,
`<sw-model></sw-model>
<div class="tree"><button aria-label="Expand Part1">+</button>${ic('part',12)}<span>Part1  (Default&lt;&lt;Default&gt;_...</span></div>
<div class="views">${[['normal'],['iso','a'],['zoomfit'],['zoombox'],['prev'],['section'],['views',,1],['style',,1],['glasses',,1],['sphere'],['scene',,1],['render',,1],['sphere']].map(([n,c,a])=>btn(n,'View '+n,13,c||'')+(a?btn('tri','View '+n+' menu',6,'m'):'')).join('')}</div>
<div class="conf">${btn('ok','Confirm',20)}${btn('cancel','Discard',20,'x')}</div>
<div class="task">${['home','library','folder','palette','ball','custom'].map(n=>btn(n,n,13)).join('')}</div>
<div class="name">*Isometric</div>`);

/* Bottom bars */
define('sw-bottom', `:host{display:flex;height:12px;background:#dfe2ec;border-top:1px solid #55576a;font:9px/10px "Liberation Sans",Arial,sans-serif;padding-left:3px}
button{height:11px;border-right:1px solid #5f6275;background:#b9bccd;padding:0 8px}.n{width:12px;padding:0;border-color:#a4a7ba}.a{font-weight:bold;background:#eff0f6}`,
`${['first','back','fwd','last'].map(n=>btn(n,n+' tab',9,'n')).join('')}<button class="a">Model</button><button>Motion Study 1</button>`);
define('sw-status', `:host{display:flex;align-items:center;height:17px;padding:0 11px 2px 2px;background:linear-gradient(#d3d6e4,#a8acc2);border-top:1px solid #777a8f;color:#15151f}
.r{margin-left:auto;display:flex;align-items:center}.e{border:1px solid #c9ccda;border-width:0 1px;padding:0 3px;margin-right:22px}.r button{margin-right:37px}.r button:last-child{margin:0}`,
`<span>SolidWorks Premium 2011</span><div class="r"><span class="e">Editing Part</span>${btn('help','Quick tips',11)}${btn('tag','Tags',12)}</div>`);
define('sw-app', `:host{display:flex;flex-direction:column;height:100vh}main{display:flex;flex:1;min-height:0}`,
`<sw-titlebar></sw-titlebar><sw-ribbon></sw-ribbon><sw-tabbar role="tablist"></sw-tabbar><main><sw-panel></sw-panel><sw-viewport></sw-viewport></main><sw-bottom></sw-bottom><sw-status></sw-status>`);
</script>
</body>
</html>
